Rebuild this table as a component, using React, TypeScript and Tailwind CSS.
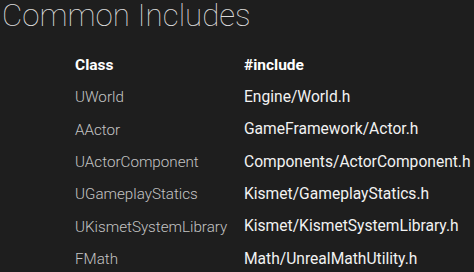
const rows: [string, string][] = [
  ["UWorld", "Engine/World.h"],
  ["AActor", "GameFramework/Actor.h"],
  ["UActorComponent", "Components/ActorComponent.h"],
  ["UGameplayStatics", "Kismet/GameplayStatics.h"],
  ["UKismetSystemLibrary", "Kismet/KismetSystemLibrary.h"],
  ["FMath", "Math/UnrealMathUtility.h"],
];

export default function App() {
  return (
    <div className="w-[474px] h-[272px] overflow-hidden bg-[#1e1e1e] font-['Roboto',sans-serif]">
      <h1 className="pl-[2px] text-[31.3px] leading-[32px] font-thin text-[#dcdcdc]">
        Common Includes
      </h1>
      <div className="ml-[75px] mt-[17px] grid grid-cols-[169px_1fr] auto-rows-[32.4px] items-center whitespace-nowrap">
        <div className="text-[15.5px] font-bold text-white">Class</div>
        <div className="text-[15.5px] font-bold text-white">#include</div>
        {rows.map(([cls, inc]) => (
          <>
            <div key={cls} className="text-[15.2px] font-light text-[#c4c4c4]">{cls}</div>
            <div key={inc} className="text-[15.6px] text-[#f2f2f2]">{inc}</div>
          </>
        ))}
      </div>
    </div>
  );
}
